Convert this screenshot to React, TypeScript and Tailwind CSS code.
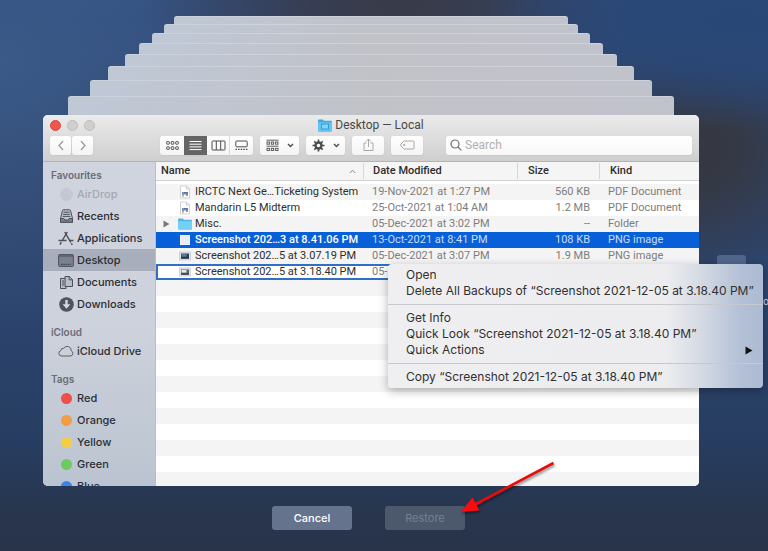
import { useState, type ReactNode } from 'react';

const STACK = [
  'mx-[131px] h-2',
  'mx-[121px] h-[9px]',
  'mx-[109px] h-[10px]',
  'mx-24 h-[11px]',
  'mx-[82px] h-3',
  'mx-[65px] h-[14px]',
  'mx-[47px] h-4',
  'mx-[25px] h-[19px]',
];

type FileRow = {
  name: string;
  date: string;
  size: string;
  kind: string;
  icon: 'pdf' | 'folder' | 'blank' | 'shot' | 'shotLight';
};

const FILES: FileRow[] = [
  { name: 'IRCTC Next Ge…Ticketing System', date: '19-Nov-2021 at 1:27 PM', size: '560 KB', kind: 'PDF Document', icon: 'pdf' },
  { name: 'Mandarin L5 Midterm', date: '25-Oct-2021 at 1:04 AM', size: '1.2 MB', kind: 'PDF Document', icon: 'pdf' },
  { name: 'Misc.', date: '05-Dec-2021 at 3:02 PM', size: '--', kind: 'Folder', icon: 'folder' },
  { name: 'Screenshot 202…3 at 8.41.06 PM', date: '13-Oct-2021 at 8:41 PM', size: '108 KB', kind: 'PNG image', icon: 'blank' },
  { name: 'Screenshot 202…5 at 3.07.19 PM', date: '05-Dec-2021 at 3:07 PM', size: '1.9 MB', kind: 'PNG image', icon: 'shot' },
  { name: 'Screenshot 202…5 at 3.18.40 PM', date: '05-Dec-2021', size: '', kind: '', icon: 'shotLight' },
];

const TAGS = [
  { name: 'Red', color: 'bg-[#ee4f48]' },
  { name: 'Orange', color: 'bg-[#f39c43]' },
  { name: 'Yellow', color: 'bg-[#f5cd45]' },
  { name: 'Green', color: 'bg-[#6ccb5f]' },
  { name: 'Blue', color: 'bg-[#3f82ee]' },
];

function FileIcon({ icon }: { icon: FileRow['icon'] }) {
  if (icon === 'folder') {
    return (
      <svg width="14" height="14" viewBox="0 0 14 14" aria-hidden="true">
        <path d="M0 2.5Q0 1.5 1 1.5H4.8L6 2.8H13Q14 2.8 14 3.8V11.5Q14 12.5 13 12.5H1Q0 12.5 0 11.5Z" fill="#4fb6e6" />
        <path d="M0 4.2H14V11.5Q14 12.5 13 12.5H1Q0 12.5 0 11.5Z" fill="#74d0f8" />
      </svg>
    );
  }
  if (icon === 'pdf') {
    return (
      <svg width="14" height="14" viewBox="0 0 14 14" aria-hidden="true">
        <path d="M2.5 1H8.5L11.5 4V13H2.5Z" fill="#fdfdfd" stroke="#c4c8ce" strokeWidth="0.8" />
        <path d="M8.5 1V4H11.5" fill="#e3e6ea" stroke="#c4c8ce" strokeWidth="0.8" />
        <path d="M4 7H10V11H8V9.5H6V10H4Z" fill="#7f94b8" />
        <path d="M6 7H10V8.5H6Z" fill="#5f7399" />
        <path d="M4 10H6V12H4Z" fill="#e2b49a" />
      </svg>
    );
  }
  if (icon === 'blank') {
    return (
      <svg width="14" height="14" viewBox="0 0 14 14" aria-hidden="true">
        <rect x="2" y="2" width="10" height="10" fill="#f3f5f8" />
        <rect x="3" y="3" width="8" height="8" fill="#e9edf3" />
      </svg>
    );
  }
  return (
    <svg width="14" height="14" viewBox="0 0 14 14" aria-hidden="true">
      <rect x="1.5" y="3" width="11" height="8" fill="#dfe2e6" stroke="#c3c6ca" strokeWidth="0.7" />
      <rect x="3" y="4.5" width="8" height="5" fill={icon === 'shot' ? '#31425c' : '#5c6470'} />
      <rect x="3.5" y="5" width="5" height="2.6" fill={icon === 'shot' ? '#5f7d98' : '#e6e8eb'} />
      <rect x="3" y="8.6" width="8" height="1" fill="#1f2937" />
    </svg>
  );
}

function Wallpaper() {
  return (
    <div className="absolute inset-0 -z-10 bg-[radial-gradient(ellipse_260px_110px_at_740px_20px,#294776_0%,#294776e6_45%,#29477600_100%),radial-gradient(ellipse_150px_130px_at_690px_150px,#36373f_0%,#36373fcc_35%,#36373f00_100%),radial-gradient(ellipse_260px_130px_at_400px_0px,#383a47_0%,#383a47cc_35%,#383a4700_100%),radial-gradient(ellipse_330px_260px_at_0px_60px,#3b5a88_0%,#3b5a8800_100%),linear-gradient(180deg,#304d80_0%,#2e4368_25%,#2c456f_55%,#273d61_80%,#28354c_94%,#29344a_100%)]" />
  );
}

function ToolButton({ label, className, children }: { label: string; className: string; children: ReactNode }) {
  return (
    <button
      type="button"
      aria-label={label}
      className={`flex h-[19px] shrink-0 items-center justify-center bg-linear-to-b from-white to-[#f4f4f4] text-[#4d4d4d] ${className}`}
    >
      {children}
    </button>
  );
}

function Chevron() {
  return (
    <svg width="7" height="5" viewBox="0 0 7 5" fill="none" stroke="currentColor" strokeWidth="1.4" aria-hidden="true">
      <path d="M1 1L3.5 3.6L6 1" />
    </svg>
  );
}

function Grid({ rows }: { rows: number[] }) {
  return (
    <svg width="13" height="13" viewBox="0 0 13 13" fill="none" stroke="currentColor" strokeWidth="1" aria-hidden="true">
      {rows.map((y) => (
        <g key={y}>
          <rect x="0.7" y={y} width="2.6" height="2.6" rx="0.5" />
          <rect x="5.2" y={y} width="2.6" height="2.6" rx="0.5" />
          <rect x="9.7" y={y} width="2.6" height="2.6" rx="0.5" />
        </g>
      ))}
    </svg>
  );
}

function Toolbar() {
  return (
    <div className="flex h-5 items-center px-[7px]">
      <div className="flex w-[110px] shrink-0 gap-px">
        <ToolButton label="Back" className="w-[21px] rounded-[3px] shadow-xs">
          <svg width="8" height="11" viewBox="0 0 8 11" fill="none" stroke="#9b9b9b" strokeWidth="1.3" aria-hidden="true">
            <path d="M6 1L2 5.5L6 10" />
          </svg>
        </ToolButton>
        <ToolButton label="Forward" className="w-[21px] rounded-[3px] shadow-xs">
          <svg width="8" height="11" viewBox="0 0 8 11" fill="none" stroke="#9b9b9b" strokeWidth="1.3" aria-hidden="true">
            <path d="M2 1L6 5.5L2 10" />
          </svg>
        </ToolButton>
      </div>

      <div className="flex shrink-0 gap-[7px]">
        <div className="flex overflow-hidden rounded-[3px] shadow-xs">
          <ToolButton label="Icons" className="w-6">
            <Grid rows={[2.6, 7.8]} />
          </ToolButton>
          <button type="button" aria-label="List" aria-pressed="true" className="flex h-[19px] w-[23px] items-center justify-center bg-[#656565] text-white">
            <svg width="13" height="11" viewBox="0 0 13 11" stroke="currentColor" strokeWidth="1" aria-hidden="true">
              <path d="M0.5 1.5H12.5M0.5 4.2H12.5M0.5 6.9H12.5M0.5 9.6H12.5" />
            </svg>
          </button>
          <ToolButton label="Columns" className="w-[23px] border-r border-[#dcdcdc]">
            <svg width="15" height="11" viewBox="0 0 15 11" fill="none" stroke="currentColor" strokeWidth="1" aria-hidden="true">
              <rect x="1" y="1" width="13" height="9" rx="0.8" />
              <path d="M5.3 1V10M9.7 1V10" />
            </svg>
          </ToolButton>
          <ToolButton label="Gallery" className="w-[23px]">
            <svg width="13" height="11" viewBox="0 0 13 11" fill="none" stroke="currentColor" strokeWidth="1" aria-hidden="true">
              <rect x="0.8" y="1" width="11.4" height="5.8" rx="0.8" />
              <path d="M0.5 9.4H12.5" strokeWidth="1.4" strokeDasharray="1.5 1.1" />
            </svg>
          </ToolButton>
        </div>
        <ToolButton label="Group by" className="w-[39px] gap-2 rounded-[3px] shadow-xs">
          <svg width="13" height="13" viewBox="0 0 13 13" fill="none" stroke="currentColor" strokeWidth="0.9" aria-hidden="true">
            <path d="M0.5 1.2H12.5M0.5 7.2H12.5" />
            <rect x="1" y="3" width="2.4" height="2.2" />
            <rect x="5.3" y="3" width="2.4" height="2.2" />
            <rect x="9.6" y="3" width="2.4" height="2.2" />
            <rect x="1" y="9.3" width="2.4" height="2.2" />
            <rect x="5.3" y="9.3" width="2.4" height="2.2" />
            <rect x="9.6" y="9.3" width="2.4" height="2.2" />
          </svg>
          <Chevron />
        </ToolButton>
        <ToolButton label="Action" className="w-[39px] gap-2 rounded-[3px] shadow-xs">
          <svg width="13" height="13" viewBox="0 0 13 13" fill="none" stroke="currentColor" aria-hidden="true">
            <circle cx="6.5" cy="6.5" r="3" strokeWidth="2.4" />
            <path d="M6.5 0.5V3M6.5 10V12.5M0.5 6.5H3M10 6.5H12.5M2.3 2.3L4 4M9 9L10.7 10.7M10.7 2.3L9 4M4 9L2.3 10.7" strokeWidth="1.7" />
          </svg>
          <Chevron />
        </ToolButton>
        <ToolButton label="Share" className="w-8 rounded-[3px] shadow-xs">
          <svg width="11" height="14" viewBox="0 0 11 14" fill="none" stroke="#a8a8a8" strokeWidth="1" aria-hidden="true">
            <path d="M3.5 5H1V12.5H10V5H7.5M5.5 9V1M3 3.5L5.5 1L8 3.5" />
          </svg>
        </ToolButton>
        <ToolButton label="Edit tags" className="w-8 rounded-[3px] shadow-xs">
          <svg width="15" height="10" viewBox="0 0 15 10" fill="none" stroke="#a8a8a8" strokeWidth="1" aria-hidden="true">
            <path d="M4.6 1H13Q14 1 14 2V8Q14 9 13 9H4.6Q4 9 3.6 8.6L1 6Q0.4 5 1 4L3.6 1.4Q4 1 4.6 1Z" />
            <circle cx="4.2" cy="5" r="0.8" />
          </svg>
        </ToolButton>
      </div>

      <label className="ml-[23px] flex h-[19px] min-w-0 flex-1 items-center gap-[3px] rounded-[3px] bg-linear-to-b from-white to-[#f8f8f8] pl-1 shadow-xs">
        <svg width="12" height="12" viewBox="0 0 12 12" fill="none" stroke="#6e6e6e" strokeWidth="1.2" aria-hidden="true">
          <circle cx="5" cy="5" r="4" />
          <path d="M8 8L11.3 11.3" />
        </svg>
        <input type="text" aria-label="Search" placeholder="Search" className="min-w-0 flex-1 font-['Roboto',sans-serif] text-xs text-[#333] outline-none placeholder:text-[#b0b0b0]" />
      </label>
    </div>
  );
}

function SideItem({ label, icon, active, dim }: { label: string; icon: ReactNode; active?: boolean; dim?: boolean }) {
  return (
    <li>
      <a
        href="#"
        className={`flex h-[22px] items-center gap-[3px] pl-[15px] text-[11px] font-medium whitespace-nowrap ${
          active ? 'bg-[#a8aebb]' : ''
        } ${dim ? 'text-[#a5a9b3]' : 'text-[#2b2e35]'}`}
      >
        <span className="flex w-4 shrink-0 justify-center">{icon}</span>
        {label}
      </a>
    </li>
  );
}

function Sidebar() {
  const heading = 'h-4 pl-2 text-[10px] leading-4 font-semibold text-[#686c76]';
  return (
    <nav aria-label="Sidebar" className="w-[113px] shrink-0 overflow-hidden border-r border-[#b9bdc6] bg-linear-to-b from-[#d0d4df] via-[#ced2dc] to-[#bac4d0] pt-[5px]">
      <h2 className={heading}>Favourites</h2>
      <ul>
        <SideItem
          label="AirDrop"
          dim
          icon={
            <svg width="15" height="15" viewBox="0 0 15 15" fill="none" aria-hidden="true">
              <circle cx="7.5" cy="7.5" r="6.5" fill="#c2c6d0" />
              <path d="M4 11A5 5 0 1 1 11 11M5.6 9.4A2.7 2.7 0 1 1 9.4 9.4" stroke="#c8ccd5" />
            </svg>
          }
        />
        <SideItem
          label="Recents"
          icon={
            <svg width="15" height="15" viewBox="0 0 15 15" fill="none" stroke="#4b4f58" aria-hidden="true">
              <path d="M3.5 1.5Q3.6 0.8 4.3 0.8H10.7Q11.4 0.8 11.5 1.5L13.5 9.5V13.2H1.5V9.5Z" fill="#bfc3cd" />
              <path d="M4.5 3.2H10.5M4.1 5.3H10.9M3.7 7.4H11.3" />
              <path d="M1.5 9.5H4.8L5.8 11H9.2L10.2 9.5H13.5V13.2H1.5Z" fill="#7d818b" />
            </svg>
          }
        />
        <SideItem
          label="Applications"
          icon={
            <svg width="16" height="15" viewBox="0 0 16 15" fill="none" stroke="#4b4f58" strokeWidth="1.5" aria-hidden="true">
              <path d="M6.8 1L12.8 11.5M9.2 1L4.6 9M3.3 11.2L2 13.6M13.4 12.4L14.2 13.8" />
              <path d="M0.5 9.6H8.5M11.6 9.6H15.5" />
            </svg>
          }
        />
        <SideItem
          label="Desktop"
          active
          icon={
            <svg width="16" height="13" viewBox="0 0 16 13" aria-hidden="true">
              <rect x="0.6" y="0.6" width="14.8" height="11.8" rx="0.8" fill="#7b818f" stroke="#4c515d" />
              <path d="M1 2H15" stroke="#4c515d" />
              <path d="M3 10.4H13" stroke="#3f444f" strokeWidth="1.3" strokeDasharray="1.5 0.9" />
            </svg>
          }
        />
        <SideItem
          label="Documents"
          icon={
            <svg width="15" height="15" viewBox="0 0 15 15" fill="#b9bdc7" stroke="#4b4f58" aria-hidden="true">
              <path d="M1.5 3.5H7V13.5H1.5Z" />
              <path d="M3 6H5M3 8H5M3 10H5" />
              <path d="M6 1.5H10.5L13.5 4.5V11.5H6Z" />
              <path d="M10.2 1.5V4.8H13.5" />
            </svg>
          }
        />
        <SideItem
          label="Downloads"
          icon={
            <svg width="15" height="15" viewBox="0 0 15 15" aria-hidden="true">
              <circle cx="7.5" cy="7.5" r="7.3" fill="#4f535c" />
              <path d="M6.3 3H8.7V7.3H11.4L7.5 11.8L3.6 7.3H6.3Z" fill="#d3d6df" />
            </svg>
          }
        />
      </ul>
      <h2 className={`mt-[9px] ${heading}`}>iCloud</h2>
      <ul>
        <SideItem
          label="iCloud Drive"
          icon={
            <svg width="16" height="12" viewBox="0 0 16 12" fill="none" stroke="#5b5f69" strokeWidth="1" aria-hidden="true">
              <path d="M4 11H12.3A2.7 2.7 0 0 0 13.2 5.8A4 4 0 0 0 5.8 3.3A2.3 2.3 0 0 0 3 5.5A2.8 2.8 0 0 0 4 11Z" />
            </svg>
          }
        />
      </ul>
      <h2 className={`mt-[9px] ${heading}`}>Tags</h2>
      <ul>
        {TAGS.map((tag) => (
          <SideItem key={tag.name} label={tag.name} icon={<span className={`size-[11px] rounded-full ${tag.color}`} />} />
        ))}
      </ul>
    </nav>
  );
}

function FileList() {
  const [selected] = useState(3);
  const target = 5;

  return (
    <div className="flex min-w-0 flex-1 flex-col bg-white">
      <table className="w-full table-fixed border-separate border-spacing-0 text-left font-['Roboto','Liberation_Sans',sans-serif] text-[11px] whitespace-nowrap">
        <colgroup>
          <col className="w-[208px]" />
          <col className="w-[154px]" />
          <col className="w-[82px]" />
          <col />
        </colgroup>
        <thead>
          <tr className="h-[19px] bg-[#f5f5f5] leading-4 text-[#2c2c2c]">
            <th className="border-b border-[#d2d2d2] p-0 pl-[5px] font-medium">
              <span className="flex items-center justify-between border-r border-[#d8d8d8] pr-[7px]">
                Name
                <svg width="7" height="5" viewBox="0 0 7 5" fill="none" stroke="#8a8a8a" aria-hidden="true">
                  <path d="M0.8 4L3.5 1.2L6.2 4" />
                </svg>
              </span>
            </th>
            <th className="border-b border-[#d2d2d2] p-0 font-medium">
              <span className="block border-r border-[#d8d8d8] pl-[9px]">Date Modified</span>
            </th>
            <th className="border-b border-[#d2d2d2] p-0 font-medium">
              <span className="block border-r border-[#d8d8d8] pl-[10px]">Size</span>
            </th>
            <th className="border-b border-[#d2d2d2] p-0 pl-[10px] font-medium">Kind</th>
          </tr>
          <tr aria-hidden="true">
            <td colSpan={4} className="h-[3px] p-0" />
          </tr>
        </thead>
        <tbody>
          {FILES.map((file, i) => {
            const on = i === selected;
            const edge = i === target ? 'border-y-2 border-[#2f6fc4]' : '';
            return (
              <tr key={file.name} className={`h-4 leading-3 ${on ? 'bg-[#0860d8] text-[#c9dcf8]' : 'text-[#7d7d7d] odd:bg-[#f4f4f4]'}`}>
                <td className={`p-0 ${edge} ${i === target ? 'border-l-2' : ''}`}>
                  <span className={`flex h-3 items-center ${i === target ? 'pl-[5px]' : 'pl-[7px]'}`}>
                    <span className="w-[15px] shrink-0">
                      {file.icon === 'folder' && (
                        <svg width="7" height="8" viewBox="0 0 7 8" aria-hidden="true">
                          <path d="M0.5 0.5L6.5 4L0.5 7.5Z" fill="#7a7a7a" />
                        </svg>
                      )}
                    </span>
                    <span className="mr-[3px] shrink-0">
                      <FileIcon icon={file.icon} />
                    </span>
                    <span className={on ? 'font-medium text-white' : 'text-[#2e2e2e]'}>{file.name}</span>
                  </span>
                </td>
                <td className={`p-0 pl-2 ${edge}`}>{file.date}</td>
                <td className={`p-0 pr-[10px] text-right ${edge}`}>{file.size}</td>
                <td className={`p-0 pl-2 ${edge}`}>{file.kind}</td>
              </tr>
            );
          })}
        </tbody>
      </table>
      <div className="flex-1 bg-[repeating-linear-gradient(180deg,#f4f4f4_0px,#f4f4f4_16px,#ffffff_16px,#ffffff_32px)]" />
    </div>
  );
}

function FinderWindow() {
  return (
    <section className="flex min-h-0 flex-1 flex-col overflow-hidden rounded-[5px] bg-white">
      <header className="h-[47px] shrink-0 border-b border-[#b4b4b4] bg-linear-to-b from-[#ebebeb] to-[#cfcfcf]">
        <div className="grid h-5 grid-cols-3 items-center px-[7px]">
          <div className="flex gap-[6px]">
            <button type="button" aria-label="Close" className="size-[11px] rounded-full border border-[#d9463f] bg-[#f0554e]" />
            <button type="button" aria-label="Minimize" className="size-[11px] rounded-full border border-[#bcbcbc] bg-[#cfcfcf]" />
            <button type="button" aria-label="Zoom" className="size-[11px] rounded-full border border-[#bcbcbc] bg-[#cfcfcf]" />
          </div>
          <h1 className="flex items-center justify-center gap-[3px] font-['Roboto','Liberation_Sans',sans-serif] text-xs whitespace-nowrap text-[#484848]">
            <svg width="14" height="13" viewBox="0 0 14 13" aria-hidden="true">
              <path d="M0 1.5Q0 0.5 1 0.5H4.8L6 1.8H13Q14 1.8 14 2.8V11.5Q14 12.5 13 12.5H1Q0 12.5 0 11.5Z" fill="#3fa9e0" />
              <path d="M0 3.2H14V11.5Q14 12.5 13 12.5H1Q0 12.5 0 11.5Z" fill="#62c4f5" />
              <rect x="3.5" y="5" width="7" height="5" fill="#7fd2f9" stroke="#3697cd" strokeWidth="0.9" />
            </svg>
            Desktop — Local
          </h1>
        </div>
        <Toolbar />
      </header>
      <div className="flex min-h-0 flex-1">
        <Sidebar />
        <FileList />
      </div>
    </section>
  );
}

function MenuItem({ children, submenu }: { children: ReactNode; submenu?: boolean }) {
  return (
    <button type="button" role="menuitem" className="flex h-4 w-full items-center justify-between pr-[10px] pl-[18px] text-left whitespace-nowrap">
      {children}
      {submenu && (
        <svg width="8" height="9" viewBox="0 0 8 9" aria-hidden="true">
          <path d="M0.5 0.5L7.5 4.5L0.5 8.5Z" fill="#111" />
        </svg>
      )}
    </button>
  );
}

function ContextMenu() {
  return (
    <div
      role="menu"
      className="absolute top-[264px] left-[388px] w-[375px] rounded-[4px] bg-[linear-gradient(90deg,#efeff1_0%,#ededf0_74%,#d3d9e3_84%,#b3c0d6_94%,#adbbd3_100%)] py-[3px] text-xs text-[#303030] shadow-[0_3px_10px_rgba(0,0,0,0.3)]"
    >
      <MenuItem>Open</MenuItem>
      <MenuItem>Delete All Backups of “Screenshot 2021-12-05 at 3.18.40 PM”</MenuItem>
      <hr className="my-[5px] border-[#c8c9ce]" />
      <MenuItem>Get Info</MenuItem>
      <MenuItem>Quick Look “Screenshot 2021-12-05 at 3.18.40 PM”</MenuItem>
      <MenuItem submenu>Quick Actions</MenuItem>
      <hr className="my-[5px] border-[#c8c9ce]" />
      <MenuItem>Copy “Screenshot 2021-12-05 at 3.18.40 PM”</MenuItem>
    </div>
  );
}

export default function App() {
  return (
    <main className="relative isolate flex h-screen flex-col overflow-hidden pt-4 pr-[69px] pl-[43px] font-['Inter','Liberation_Sans',sans-serif]">
      <Wallpaper />

      {/* older snapshots receding behind the window */}
      <div className="shrink-0" aria-hidden="true">
        {STACK.map((layer) => (
          <div key={layer} className={`rounded-t-[3px] border-t border-[#cdd1d9] bg-linear-to-r from-[#bfc8d6] via-[#c1c2c8] to-[#c1c3cc] ${layer}`} />
        ))}
      </div>

      <FinderWindow />

      <footer className="flex shrink-0 justify-center gap-[33px] pt-5 pr-[5px] pb-[21px] text-[11px]">
        <button type="button" className="h-6 w-20 rounded-[3px] bg-[#66738c] font-medium text-white">
          Cancel
        </button>
        <button type="button" disabled className="h-6 w-20 rounded-[3px] bg-[#4c586b] text-[#748094]">
          Restore
        </button>
      </footer>

      {/* desktop item partly hidden under the menu */}
      <div className="absolute top-[255px] left-[717px] h-5 w-[29px] rounded-[3px] bg-[#50658a]" />
      <span className="absolute top-[293px] left-[763px] text-[10px] leading-4 text-[#d5dbe6]">o</span>

      <ContextMenu />

      <svg className="pointer-events-none absolute top-[455px] left-[455px] drop-shadow-[1px_2px_1px_rgba(0,0,0,0.4)]" width="105" height="62" viewBox="0 0 105 62" aria-hidden="true">
        <path d="M98.5 8L20 49.5" stroke="#e80c10" strokeWidth="2.6" />
        <path d="M5.5 57L17.6 42.6L24.4 55.6Z" fill="#f80c10" />
      </svg>
    </main>
  );
}
